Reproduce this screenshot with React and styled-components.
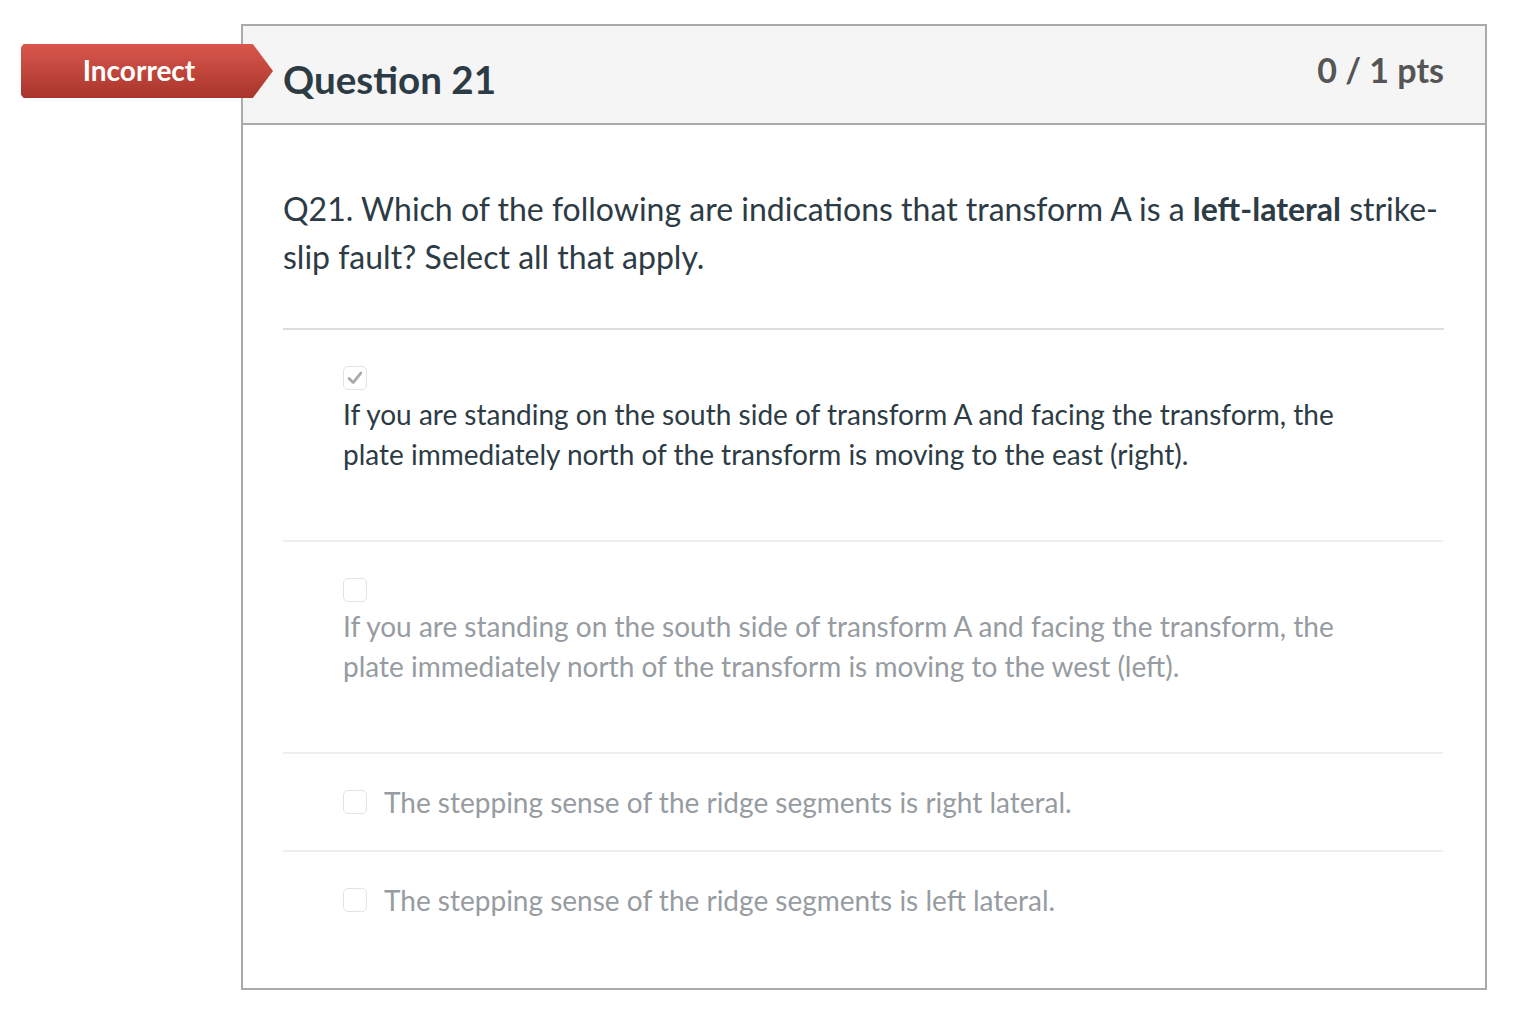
import React from 'react';
import styled, { createGlobalStyle } from 'styled-components';

const GlobalStyle = createGlobalStyle`
    body{
        margin:0;
        background:#fff;
        font-family:Lato, "Open Sans", sans-serif;
        color:#2d3b45;
    }
`

const answers = [
    {
        text: 'If you are standing on the south side of transform A and facing the transform, the plate immediately north of the transform is moving to the east (right).',
        checked: true,
        stacked: true,
    },
    {
        text: 'If you are standing on the south side of transform A and facing the transform, the plate immediately north of the transform is moving to the west (left).',
        checked: false,
        stacked: true,
    },
    {
        text: 'The stepping sense of the ridge segments is right lateral.',
        checked: false,
        stacked: false,
    },
    {
        text: 'The stepping sense of the ridge segments is left lateral.',
        checked: false,
        stacked: false,
    },
];

const App = () => {
    return(
        <Page>
            <GlobalStyle />
            <Wrapper>
                <Badge>Incorrect</Badge>
                <Card>
                    <Header>
                        <Title>Question 21</Title>
                        <Points>0 / 1 pts</Points>
                    </Header>
                    <Body>
                        <QuestionText>
                            Q21. Which of the following are indications that transform A is a <strong>left-lateral</strong> strike-slip fault? Select all that apply.
                        </QuestionText>
                        <Answers>
                            {answers.map((a, i) => (
                                <Answer key={i} $stacked={a.stacked}>
                                    <Checkbox>
                                        {a.checked && (
                                            <svg width="24" height="24" viewBox="0 0 24 24">
                                                <path d="M5.5 12.5 L10 17 L18.5 6.5" fill="none" stroke="#a9a9a9" strokeWidth="3" strokeLinecap="round" strokeLinejoin="round" />
                                            </svg>
                                        )}
                                    </Checkbox>
                                    <AnswerText $selected={a.checked}>{a.text}</AnswerText>
                                </Answer>
                            ))}
                        </Answers>
                    </Body>
                </Card>
            </Wrapper>
        </Page>
    );
};

const Page = styled.div`
    padding:24px 0 38px 241px;
`
const Wrapper = styled.div`
    position:relative;
    width:1246px;
`
const Badge = styled.div`
    position:absolute;
    left:-220px;
    top:20px;
    width:252px;
    height:54px;
    box-sizing:border-box;
    padding-right:16px;
    padding-bottom:2px;
    display:flex;
    align-items:center;
    justify-content:center;
    color:#fff;
    font-weight:700;
    font-size:28px;
    background:linear-gradient(#d9574d, #a9352b);
    clip-path:polygon(0 6%, 1% 0, 92% 0, 100% 50%, 92% 100%, 1% 100%, 0 94%);
    border-radius:3px;
    z-index:2;
`
const Card = styled.div`
    border:2px solid #aaa;
    background:#fff;
`
const Header = styled.div`
    display:flex;
    justify-content:space-between;
    align-items:flex-start;
    background:#f5f5f5;
    border-bottom:2px solid #aaa;
    height:99px;
    box-sizing:border-box;
    padding:22px 41px 0 40px;
`
const Title = styled.h2`
    margin:7px 0 0;
    font-size:38.6px;
    font-weight:700;
    color:#2d3b45;
    line-height:48px;
`
const Points = styled.div`
    font-size:34px;
    font-weight:700;
    color:#555;
    line-height:44px;
`
const Body = styled.div`
    padding:60px 41px 40px 40px;
`
const QuestionText = styled.p`
    margin:0;
    font-size:32px;
    line-height:48px;
    color:#2d3b45;
    padding-bottom:47px;
    border-bottom:2px solid #ddd;
    strong{
        font-weight:700;
    }
`
const Answers = styled.div`
    display:flex;
    flex-direction:column;
    padding-right:1px;
`
const Answer = styled.div`
    display:flex;
    flex-direction:${p => p.$stacked ? 'column' : 'row'};
    align-items:${p => p.$stacked ? 'flex-start' : 'center'};
    gap:${p => p.$stacked ? '4px' : '17px'};
    padding:${p => p.$stacked ? '36px 60px 66px' : '28px 60px'};
    border-bottom:2px solid #eee;
    &:last-child{
        border-bottom:none;
    }
`
const Checkbox = styled.span`
    width:24px;
    height:24px;
    box-sizing:border-box;
    border:1px solid #e3e3e3;
    border-radius:5px;
    background:#fff;
    display:flex;
    align-items:center;
    justify-content:center;
    flex-shrink:0;
`
const AnswerText = styled.div`
    font-size:28px;
    line-height:40px;
    color:${p => p.$selected ? '#2d3b45' : '#969ca1'};
`

export default App;
